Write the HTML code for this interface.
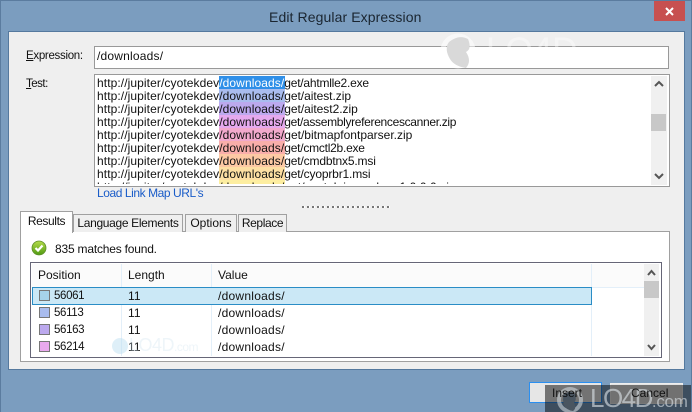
<!DOCTYPE html>
<html>
<head>
<meta charset="utf-8">
<style>
html,body{margin:0;padding:0;background:#7b9dbf;}
#w{position:relative;width:692px;height:412px;overflow:hidden;background:#7b9dbf;font-family:"Liberation Sans",sans-serif;font-size:12px;color:#111;box-sizing:border-box;border:1px solid #5b7c9f;border-bottom:0;}
#w *{box-sizing:border-box;}
.a{position:absolute;white-space:nowrap;}
.t{position:absolute;white-space:nowrap;line-height:14px;height:14px;letter-spacing:.09px;}
.box{position:absolute;background:#fff;border:1px solid #a0a0a0;}
.hl{position:absolute;left:124px;width:66px;height:13px;}
.tab{position:absolute;background:#efefef;border:1px solid #a0a0a0;border-bottom:0;text-align:center;line-height:17px;white-space:nowrap;}
.sw{position:absolute;left:38px;width:11px;height:11px;border:1px solid #777;}
.sb{position:absolute;background:#f0f0f0;}
.n{font-size:11.5px;letter-spacing:-.35px;}
.d{letter-spacing:.25px;}
u{text-decoration:underline;}
</style>
</head>
<body>
<div id="w">
  <div class="a" style="left:268px;top:7px;font-size:14px;line-height:18px;color:#1a2530;letter-spacing:.1px;">Edit Regular Expression</div>
  <div class="a" style="left:653px;top:0;width:31px;height:20px;background:#c75050;"></div>
  <svg class="a" style="left:653px;top:0;" width="31" height="20"><path d="M12 7 L19 14 M19 7 L12 14" stroke="#fff" stroke-width="2"/></svg>

  <div class="a" style="left:7px;top:30px;width:677px;height:339px;background:#efefef;border:1px solid #55799e;"></div>

  <div class="t" style="left:25px;top:48px;font-size:11.5px;letter-spacing:-.3px;"><u>E</u>xpression:</div>
  <div class="box" style="left:93px;top:45px;width:575px;height:23px;border-color:#999;"></div>
  <div class="t" style="left:96px;top:48px;letter-spacing:.2px;">/downloads/</div>

  <div class="t" style="left:25px;top:76px;font-size:11.5px;letter-spacing:-.5px;"><u>T</u>est:</div>
  <div class="box" style="left:93px;top:73px;width:576px;height:113px;border-color:#999;"></div>
  <div class="a" style="left:94px;top:74px;width:556px;height:109px;overflow:hidden;">
    <div class="hl" style="top:1px;background:#2f8fe8;"></div>
    <div class="hl" style="top:14px;background:#a9bcee;"></div>
    <div class="hl" style="top:27px;background:#bca9ee;"></div>
    <div class="hl" style="top:40px;background:#e5a9ee;"></div>
    <div class="hl" style="top:53px;background:#f2a9cc;"></div>
    <div class="hl" style="top:66px;background:#f9aeaa;"></div>
    <div class="hl" style="top:79px;background:#fdc9a4;"></div>
    <div class="hl" style="top:92px;background:#fddfa3;"></div>
    <div class="hl" style="top:105px;background:#fdeea0;"></div>
    <div class="t" style="left:2px;top:1px;">http://jupiter/cyotekdev<span style="color:#fff">/downloads/</span><span style="letter-spacing:-.22px">get/ahtmlle2.exe</span></div>
    <div class="t" style="left:2px;top:14px;">http://jupiter/cyotekdev/downloads/<span style="letter-spacing:-.05px">get/aitest.zip</span></div>
    <div class="t" style="left:2px;top:27px;">http://jupiter/cyotekdev/downloads/<span style="letter-spacing:-.04px">get/aitest2.zip</span></div>
    <div class="t" style="left:2px;top:40px;">http://jupiter/cyotekdev/downloads/<span style="letter-spacing:-.32px">get/assemblyreferencescanner.zip</span></div>
    <div class="t" style="left:2px;top:53px;">http://jupiter/cyotekdev/downloads/<span style="letter-spacing:0">get/bitmapfontparser.zip</span></div>
    <div class="t" style="left:2px;top:66px;">http://jupiter/cyotekdev/downloads/<span style="letter-spacing:-.24px">get/cmctl2b.exe</span></div>
    <div class="t" style="left:2px;top:79px;">http://jupiter/cyotekdev/downloads/<span style="letter-spacing:-.16px">get/cmdbtnx5.msi</span></div>
    <div class="t" style="left:2px;top:92px;">http://jupiter/cyotekdev/downloads/<span style="letter-spacing:-.16px">get/cyoprbr1.msi</span></div>
    <div class="t" style="left:2px;top:105px;">http://jupiter/cyotekdev/downloads/get/cyotek.imagebox.1.0.0.0.zip</div>
  </div>
  <div class="sb" style="left:650px;top:75px;width:16px;height:109px;"></div>
  <div class="a" style="left:650px;top:113px;width:15px;height:17px;background:#c8c8c8;"></div>
  <svg class="a" style="left:650px;top:75px;" width="16" height="109"><path d="M4 10 L8 6 L12 10 M4 98 L8 102 L12 98" fill="none" stroke="#555" stroke-width="2"/></svg>
  <div class="t" style="left:96px;top:185px;color:#1a5cc8;letter-spacing:-.43px;">Load Link Map URL's</div>

  <div class="a" style="left:301px;top:205px;width:88px;height:2px;background:repeating-linear-gradient(90deg,#777 0,#777 2px,#fff 2px,#fff 3px,transparent 3px,transparent 5px);"></div>

  <div class="a" style="left:19px;top:230px;width:650px;height:131px;background:#fff;border:1px solid #a0a0a0;"></div>
  <div class="tab" style="left:72px;top:213px;width:110px;height:18px;letter-spacing:-.33px;">Language Elements</div>
  <div class="tab" style="left:184px;top:213px;width:52px;height:18px;">Options</div>
  <div class="tab" style="left:237px;top:213px;width:49px;height:18px;letter-spacing:-.4px;">Replace</div>
  <div class="tab" style="left:19px;top:210px;width:53px;height:22px;background:#fff;line-height:19px;letter-spacing:-.4px;">Results</div>

  <svg class="a" style="left:30px;top:239px;" width="16" height="16"><defs><linearGradient id="g" x1="0" y1="0" x2="0" y2="1"><stop offset="0" stop-color="#b5dc4a"/><stop offset="1" stop-color="#4f9a12"/></linearGradient></defs><circle cx="8" cy="8" r="7" fill="url(#g)" stroke="#5f8f2a" stroke-width=".8"/><path d="M4.5 8 L7 10.5 L11.5 5.5" fill="none" stroke="#fff" stroke-width="2.2"/></svg>
  <div class="t" style="left:54px;top:241px;letter-spacing:-.2px;">835 matches found.</div>

  <div class="box" style="left:29px;top:261px;width:632px;height:96px;border-color:#667;"></div>
  <div class="a" style="left:31px;top:263px;width:612px;height:23px;background:#fbfbfb;"></div>
  <div class="a" style="left:31px;top:286px;width:612px;height:1px;background:#e3eff9;"></div>
  <div class="a" style="left:120px;top:263px;width:1px;height:92px;background:#e3eff9;"></div>
  <div class="a" style="left:210px;top:263px;width:1px;height:92px;background:#e3eff9;"></div>
  <div class="a" style="left:590px;top:263px;width:1px;height:92px;background:#e3eff9;"></div>
  <div class="a" style="left:31px;top:286px;width:560px;height:18px;background:#cbe8f6;border:1px solid #2a8dc6;"></div>

  <div class="t" style="left:37px;top:267px;letter-spacing:0;">Position</div>
  <div class="t" style="left:127px;top:267px;letter-spacing:0;">Length</div>
  <div class="t" style="left:217px;top:267px;letter-spacing:0;">Value</div>

  <div class="sw" style="top:289px;background:#a6d3ea;"></div>
  <div class="t n" style="left:53px;top:288px;">56061</div><div class="t" style="left:127px;top:288px;">11</div><div class="t d" style="left:217px;top:288px;">/downloads/</div>
  <div class="sw" style="top:306px;background:#a9bcee;"></div>
  <div class="t n" style="left:53px;top:305px;">56113</div><div class="t" style="left:127px;top:305px;">11</div><div class="t d" style="left:217px;top:305px;">/downloads/</div>
  <div class="sw" style="top:323px;background:#bca9ee;"></div>
  <div class="t n" style="left:53px;top:322px;">56163</div><div class="t" style="left:127px;top:322px;">11</div><div class="t d" style="left:217px;top:322px;">/downloads/</div>
  <div class="sw" style="top:340px;background:#e9a9ee;"></div>
  <div class="t n" style="left:53px;top:339px;">56214</div><div class="t" style="left:127px;top:339px;">11</div><div class="t d" style="left:217px;top:339px;">/downloads/</div>

  <div class="sb" style="left:643px;top:263px;width:15px;height:92px;"></div>
  <div class="a" style="left:643px;top:280px;width:15px;height:17px;background:#c8c8c8;"></div>
  <svg class="a" style="left:643px;top:263px;" width="15" height="92"><path d="M4 11 L7.5 7 L11 11 M4 81 L7.5 85 L11 81" fill="none" stroke="#555" stroke-width="2"/></svg>

  <div class="a" style="left:528px;top:381px;width:73px;height:21px;background:#e6e6e6;border:1px solid #2a8ff0;"></div>
  <div class="a" style="left:609px;top:382px;width:73px;height:21px;background:#e3e3e3;border:1px solid #eee;"></div>

  <!-- watermarks -->
  <svg class="a" style="left:431px;top:32px;" width="52" height="38"><circle cx="26" cy="18" r="15" fill="none" stroke="#fff" stroke-width="5" opacity=".55"/><path d="M17 9 Q27 1 36 6 Q40 16 34 19 Q40 28 34 35 Q22 33 18 26 Q12 16 17 9Z" fill="#d9d9d9"/></svg>
  <div class="a" style="left:485px;top:28px;font-size:35px;line-height:44px;color:#fff;opacity:.4;">LO4D<span style="font-size:21px">.com</span></div>
  <svg class="a" style="left:108px;top:335px;opacity:.5" width="22" height="20"><circle cx="11" cy="10" r="8" fill="#bfe0f2"/></svg>
  <div class="a" style="left:128px;top:334px;font-size:18px;line-height:20px;color:#cfe3f0;opacity:.35;letter-spacing:-.5px;">LO4D<span style="font-size:12px">.com</span></div>

  <div class="a" style="left:544px;top:384px;width:147px;height:28px;background:rgba(0,0,0,.5);"></div>
  <svg class="a" style="left:552px;top:385px;" width="34" height="27"><circle cx="17" cy="14" r="11" fill="none" stroke="#cfd6db" stroke-width="4" opacity=".6"/><path d="M11 8 Q18 4 22 8 Q24 14 21 17 Q24 22 20 25 Q13 24 11 19 Q9 13 11 8Z" fill="#4a5560"/></svg>
  <div class="a" style="left:589px;top:382px;font-size:26px;line-height:30px;color:#dfe6eb;opacity:.6;letter-spacing:-1.5px;">LO4D<span style="font-size:17px;letter-spacing:-.3px">.com</span></div>
  <div class="a" style="left:551px;top:385px;line-height:14px;color:#000;opacity:.85;">Insert</div>
  <div class="a" style="left:630px;top:385px;line-height:14px;color:#000;opacity:.85;">Cancel</div>
  <div class="a" style="left:-1px;top:411px;width:692px;height:1px;background:#5b7c9f;"></div>
</div>
</body>
</html>
